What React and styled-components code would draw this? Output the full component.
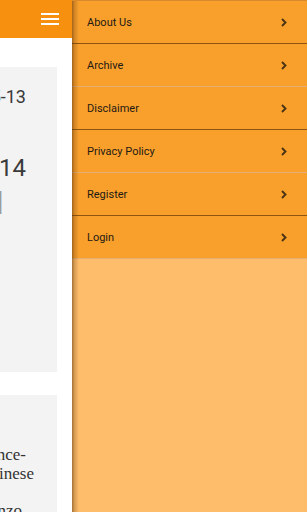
import React from "react";
import styled, { createGlobalStyle } from "styled-components";

const GlobalStyle = createGlobalStyle`
  html, body {
    margin: 0;
    padding: 0;
    height: 100%;
    overflow: hidden;
    background: #ffffff;
  }
  #root {
    height: 100%;
  }
`;

const Screen = styled.div`
  display: flex;
  width: 307px;
  height: 512px;
  overflow: hidden;
`;

const PageColumn = styled.div`
  width: 72px;
  flex: none;
  display: flex;
  flex-direction: column;
  overflow: hidden;
  background: #ffffff;
`;

const Header = styled.div`
  height: 38px;
  flex: none;
  background: #f8900f;
  display: flex;
  align-items: center;
  justify-content: flex-end;
  padding-right: 13px;
`;

const Burger = styled.div`
  display: flex;
  flex-direction: column;
  gap: 3px;
  span {
    display: block;
    width: 18px;
    height: 2px;
    background: #ffffff;
  }
`;

const PageBody = styled.div`
  display: flex;
  flex-direction: column;
  gap: 23px;
  padding: 29px 15px 0 0;
`;

const Card = styled.div`
  background: #f3f3f3;
  height: ${(p) => p.$height}px;
  display: flex;
  flex-direction: column;
  align-items: flex-end;
  padding-top: ${(p) => p.$top}px;
  box-sizing: border-box;
`;

const DateLine = styled.div`
  font-family: Roboto, "Liberation Sans", sans-serif;
  font-size: ${(p) => p.$size}px;
  line-height: 1;
  color: ${(p) => p.$color || "#3a3a3a"};
  margin-right: ${(p) => p.$trail}px;
  margin-top: ${(p) => p.$gap}px;
  white-space: nowrap;
`;

const StoryLine = styled.div`
  font-family: "Liberation Serif", "DejaVu Serif", serif;
  font-size: 17px;
  line-height: 19px;
  color: #333333;
  margin-right: ${(p) => p.$trail}px;
  margin-top: ${(p) => p.$gap || 0}px;
  white-space: nowrap;
`;

const Drawer = styled.nav`
  position: relative;
  flex: 1;
  display: flex;
  flex-direction: column;
  background: #febd6b;
  border-top: 1px solid #d88a2c;

  &::after {
    content: "";
    position: absolute;
    top: 0;
    bottom: 0;
    left: 0;
    width: 7px;
    background: linear-gradient(
      to right,
      rgba(90, 50, 10, 0.55),
      rgba(90, 50, 10, 0.25) 35%,
      rgba(90, 50, 10, 0)
    );
    pointer-events: none;
  }
`;

const Item = styled.a`
  height: 42px;
  flex: none;
  display: flex;
  align-items: center;
  justify-content: space-between;
  padding: 0 20px 0 15px;
  background: #f9a02c;
  border-bottom: 1px solid ${(p) => (p.$dark ? "#8e5412" : "#e4ae74")};
  font-family: Roboto, "Liberation Sans", sans-serif;
  font-size: 11px;
  color: #1e1a14;
  text-decoration: none;
  box-sizing: content-box;
`;

const Chevron = () => (
  <svg width="6" height="9" viewBox="0 0 6 9">
    <path
      d="M1 1 L4.5 4.5 L1 8"
      fill="none"
      stroke="#4b3416"
      strokeWidth="1.9"
    />
  </svg>
);

const menu = [
  "About Us",
  "Archive",
  "Disclaimer",
  "Privacy Policy",
  "Register",
  "Login",
];

export default function App() {
  return (
    <Screen>
      <GlobalStyle />
      <PageColumn>
        <Header>
          <Burger>
            <span />
            <span />
            <span />
          </Burger>
        </Header>
        <PageBody>
          <Card $height={305} $top={21}>
            <DateLine $size={18} $trail={31} $gap={0}>
              2014-05-13
            </DateLine>
            <DateLine $size={24} $trail={31} $gap={50}>
              2014
            </DateLine>
            <DateLine $size={24} $trail={54} $gap={10} $color="#9c9c9c">
              ]
            </DateLine>
          </Card>
          <Card $height={160} $top={50}>
            <StoryLine $trail={31}>Entrance-</StoryLine>
            <StoryLine $trail={23}>Chinese</StoryLine>
            <StoryLine $trail={35} $gap={18}>
              Lorenzo
            </StoryLine>
          </Card>
        </PageBody>
      </PageColumn>
      <Drawer>
        {menu.map((label, i) => (
          <Item key={label} href="#" $dark={i % 2 === 0}>
            {label}
            <Chevron />
          </Item>
        ))}
      </Drawer>
    </Screen>
  );
}
